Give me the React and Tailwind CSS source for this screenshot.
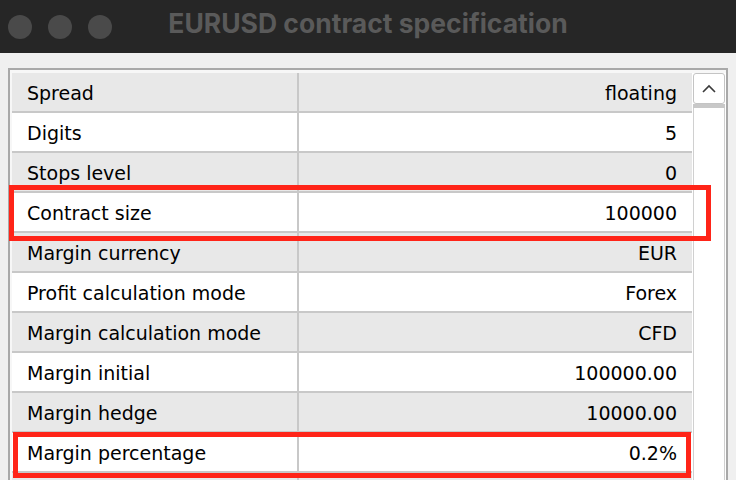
import React from "react";

const rows = [
  ["Spread", "floating"],
  ["Digits", "5"],
  ["Stops level", "0"],
  ["Contract size", "100000"],
  ["Margin currency", "EUR"],
  ["Profit calculation mode", "Forex"],
  ["Margin calculation mode", "CFD"],
  ["Margin initial", "100000.00"],
  ["Margin hedge", "10000.00"],
  ["Margin percentage", "0.2%"],
  ["", ""],
];

export default function App() {
  return (
    <div className="relative w-[736px] h-[480px] overflow-hidden bg-[#f0f0f0]">
      <div className="h-[53px] bg-[#262626] grid grid-cols-[1fr_auto_1fr] items-center">
        <div className="flex gap-4 pl-2">
          <div className="w-6 h-6 rounded-full bg-[#4a4a4a]" />
          <div className="w-6 h-6 rounded-full bg-[#4a4a4a]" />
          <div className="w-6 h-6 rounded-full bg-[#4a4a4a]" />
        </div>
        <div
          className="text-[26.5px] font-bold text-[#5a5a5a] pb-[6px] leading-none"
          style={{ fontFamily: "Inter, 'Open Sans', sans-serif" }}
        >
          EURUSD contract specification
        </div>
        <div />
      </div>
      <div className="pt-[15px] pl-2">
        <div className="w-[720px] h-[420px] border-2 border-[#a9a9a9] bg-[#f7f7f7] pl-[2px] pt-[3px] flex">
          <div
            className="w-[680px] flex flex-col text-[19px] text-black"
            style={{ fontFamily: "'DejaVu Sans', Verdana, sans-serif" }}
          >
            {rows.map(([k, v], i) => (
              <div
                key={i}
                className={`flex h-[40px] shrink-0 border-b-2 border-[#c8c8c8] ${
                  i % 2 === 0 ? "bg-[#e8e8e8]" : "bg-white"
                }`}
              >
                <div className="w-[287px] border-r-2 border-[#c8c8c8] pl-[15px] pt-[3px] flex items-center">
                  {k}
                </div>
                <div className="flex-1 pr-[15px] pt-[3px] flex items-center justify-end">
                  {v}
                </div>
              </div>
            ))}
          </div>
          <div className="w-[34px] flex flex-col bg-white">
            <div className="mx-[1px] h-[31px] shrink-0 border border-[#c4c4c4] rounded-[3px] bg-white flex items-center justify-center">
              <svg width="16" height="10" viewBox="0 0 16 10">
                <path d="M2 8 L8 2 L14 8" fill="none" stroke="#3a3a3a" strokeWidth="1.6" />
              </svg>
            </div>
            <div className="mx-[1px] h-[4px] shrink-0 bg-[#c8c8c8]" />
            <div className="mx-[1px] flex-1 border-x border-[#d0d0d0] bg-white" />
          </div>
        </div>
      </div>
      <div className="absolute left-[9px] top-[185px] w-[702px] h-[56px] border-[5px] border-[#ff2418]" />
      <div className="absolute left-[13px] top-[432px] w-[678px] h-[46px] border-[5px] border-[#ff2418]" />
    </div>
  );
}
